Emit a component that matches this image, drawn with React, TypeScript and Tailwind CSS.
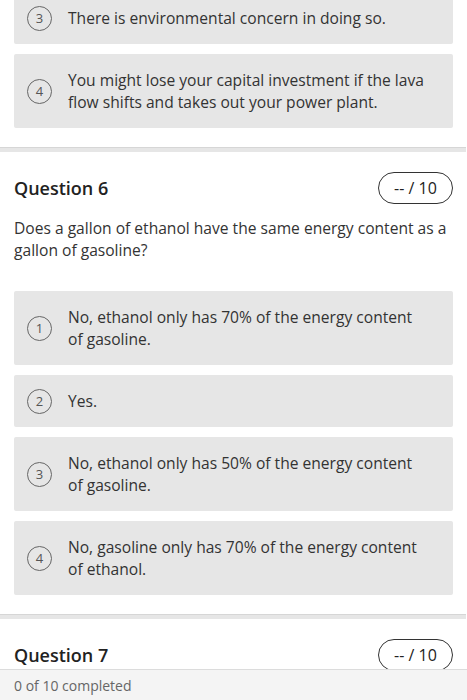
import React from "react";

const font = { fontFamily: '"Open Sans", "Noto Sans", Arial, sans-serif' };

function Option({ n, text }: { n: number; text: string }) {
  return (
    <div className="flex items-center bg-[#e6e6e6] rounded-[2px] pl-[13px] pr-[24px] py-[15px]">
      <div className="w-[25px] h-[25px] -my-[2px] shrink-0 rounded-full border-[1.5px] border-[#666] flex items-center justify-center text-[13px] text-[#555] leading-none">
        {n}
      </div>
      <p className="ml-[16px] text-[15.6px] leading-[22px] text-[#333]">{text}</p>
    </div>
  );
}

function Separator() {
  return <div className="h-[5px] bg-[#e6e6e6] border-t border-[#d6d6d6] mr-[1px]" />;
}

function Header({ title }: { title: string }) {
  return (
    <div className="flex items-center justify-between">
      <h2 className="text-[18px] font-semibold text-[#222] leading-none">{title}</h2>
      <div className="w-[75px] h-[32px] rounded-full border-[1.5px] border-[#333] flex items-center justify-center text-[16px] text-[#222]">
        -- / 10
      </div>
    </div>
  );
}

export default function App() {
  return (
    <div className="relative h-[700px] w-[467px] overflow-hidden bg-white" style={font}>
      <div className="px-[14px] pb-[19px] -mt-[8px] flex flex-col gap-[10px]">
        <Option n={3} text="There is environmental concern in doing so." />
        <Option n={4} text="You might lose your capital investment if the lava flow shifts and takes out your power plant." />
      </div>
      <Separator />

      <section className="px-[14px] pt-[20px] pb-[19px]">
        <Header title="Question 6" />
        <p className="mt-[13px] text-[15.6px] leading-[22px] text-[#333]">
          Does a gallon of ethanol have the same energy content as a gallon of gasoline?
        </p>
        <div className="mt-[30px] flex flex-col gap-[10px]">
          <Option n={1} text="No, ethanol only has 70% of the energy content of gasoline." />
          <Option n={2} text="Yes." />
          <Option n={3} text="No, ethanol only has 50% of the energy content of gasoline." />
          <Option n={4} text="No, gasoline only has 70% of the energy content of ethanol." />
        </div>
      </section>
      <Separator />

      <section className="px-[14px] pt-[20px]">
        <Header title="Question 7" />
      </section>

      <div className="absolute bottom-0 left-0 right-0 h-[31px] bg-[#f4f4f4] border-t border-[#dcdcdc] flex items-center px-[14px]">
        <span className="text-[14px] text-[#666]">0 of 10 completed</span>
      </div>
    </div>
  );
}
